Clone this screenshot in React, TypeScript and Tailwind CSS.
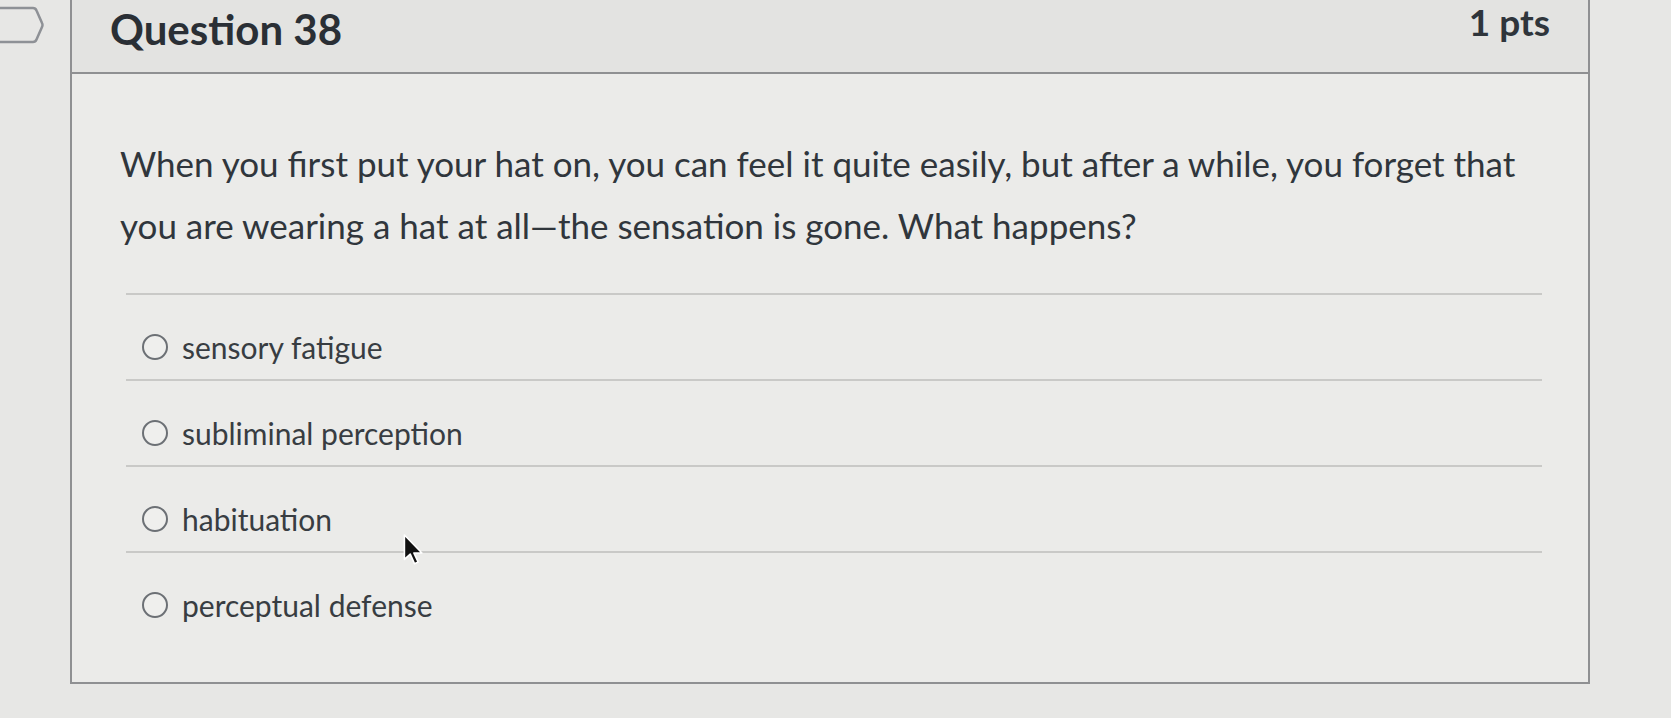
import React from "react";

const options = [
  "sensory fatigue",
  "subliminal perception",
  "habituation",
  "perceptual defense",
];

const Bookmark: React.FC = () => (
  <svg width="46" height="42" viewBox="0 0 46 42" className="mt-[4px]">
    <path
      d="M-2 4 H33 Q35.5 4 36.5 6.5 L42 19 Q43 21 42 23 L36.5 35.5 Q35.5 38 33 38 H-2"
      fill="none"
      stroke="#8e9196"
      strokeWidth="2.5"
      strokeLinejoin="round"
    />
  </svg>
);

const Cursor: React.FC = () => (
  <svg
    width="26"
    height="36"
    viewBox="0 0 24 34"
    className="absolute left-[402px] top-[534px]"
  >
    <path
      d="M2 1 L2 24 L7.5 19 L11.5 28 L15 26.5 L11 18 L18.5 18 Z"
      fill="#111"
      stroke="#fff"
      strokeWidth="1.5"
      strokeLinejoin="round"
    />
  </svg>
);

const App: React.FC = () => {
  return (
    <div
      className="relative w-[1671px] h-[718px] overflow-hidden bg-[#e7e7e5] flex"
      style={{ fontFamily: "Lato, 'Open Sans', sans-serif" }}
    >
      <div className="w-[70px] shrink-0">
        <Bookmark />
      </div>

      <div className="w-[1520px] h-[684px] border-l-2 border-r-2 border-b-2 border-[#8f9092] bg-[#ebebe9] flex flex-col">
        <div className="h-[74px] bg-[#e3e3e1] border-b-2 border-[#8f9092] flex items-start justify-between pl-[38px] pr-[38px]">
          <h2 className="text-[42px] font-bold text-[#2a2f35] leading-[1.2] mt-[4px]">
            Question 38
          </h2>
          <span className="text-[37px] font-bold text-[#2f353b] leading-[1.2] mt-0">
            1 pts
          </span>
        </div>

        <div className="pl-[48px] pr-[46px] pt-[58px]">
          <p className="w-[1430px] text-[35px] leading-[62px] text-[#30363c]">
            When you first put your hat on, you can feel it quite easily, but
            after a while, you forget that you are wearing a hat at all—the
            sensation is gone. What happens?
          </p>

          <div className="mt-[37px] border-t-2 border-[#c9c9c7] ml-[6px]">
            {options.map((opt, idx) => (
              <div
                key={idx}
                className={`h-[86px] flex items-start pt-[37px] pl-[16px] ${
                  idx < options.length - 1 ? "border-b-2 border-[#c9c9c7]" : ""
                }`}
              >
                <span className="w-[26px] h-[26px] rounded-full border-2 border-[#6c7075] bg-[#efefed] shrink-0 mt-[2px]" />
                <span className="ml-[14px] text-[30px] leading-[30px] text-[#383d42]">
                  {opt}
                </span>
              </div>
            ))}
          </div>
        </div>
      </div>

      <Cursor />
    </div>
  );
};

export default App;
